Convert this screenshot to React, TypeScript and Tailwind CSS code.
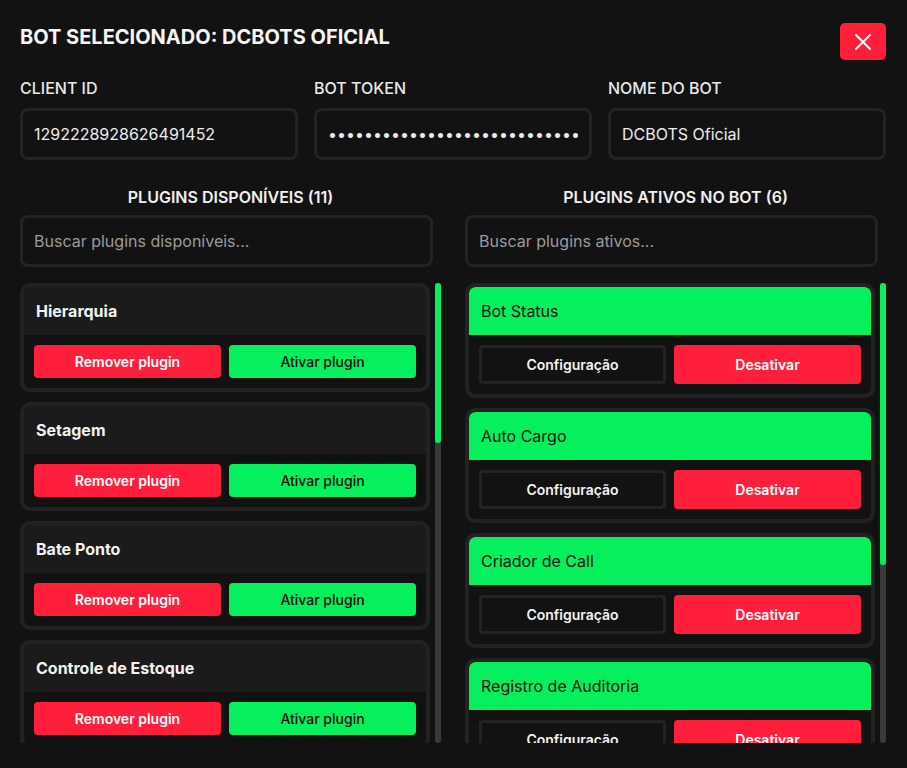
import React from "react";

type Plugin = { name: string };

const available: Plugin[] = [
  { name: "Hierarquia" },
  { name: "Setagem" },
  { name: "Bate Ponto" },
  { name: "Controle de Estoque" },
];

const active: Plugin[] = [
  { name: "Bot Status" },
  { name: "Auto Cargo" },
  { name: "Criador de Call" },
  { name: "Registro de Auditoria" },
];

const Field = ({ label, value, type = "text" }: { label: string; value: string; type?: string }) => (
  <div className="flex flex-col">
    <label className="mb-[10px] text-[16px] font-medium leading-5 text-[#e8e8e8]">{label}</label>
    <input
      readOnly
      type={type}
      value={value}
      className="h-[52px] w-full rounded-[8px] border-[3px] border-[#232323] bg-[#121212] px-[11px] text-[16px] text-[#ececec] outline-none"
    />
  </div>
);

const Scrollbar = ({ thumb }: { thumb: number }) => (
  <div className="flex w-[6px] shrink-0 flex-col rounded-full bg-[#3a3a3a]">
    <div className="w-full rounded-full bg-[#05f05b]" style={{ height: thumb }} />
  </div>
);

const AvailableCard = ({ name }: Plugin) => (
  <div className="shrink-0 overflow-hidden rounded-[10px] border-4 border-[#222222] bg-[#121212]">
    <div className="flex h-[48px] items-center rounded-t-[6px] bg-[#1b1b1b] pl-3 text-[16px] font-bold text-[#f2f2f2]">
      {name}
    </div>
    <div className="grid grid-cols-2 gap-2 px-2.5 py-2.5">
      <button className="h-[33px] rounded-[4px] bg-[#ff1f3a] text-[14px] font-semibold text-white">
        Remover plugin
      </button>
      <button className="h-[33px] rounded-[4px] bg-[#05f05b] text-[14px] font-medium text-[#0d0d0d]">
        Ativar plugin
      </button>
    </div>
  </div>
);

const ActiveCard = ({ name }: Plugin) => (
  <div className="shrink-0 overflow-hidden rounded-[10px] border-4 border-[#222222] bg-[#121212]">
    <div className="flex h-[48px] items-center rounded-t-[6px] bg-[#05f05b] pl-3 text-[16px] text-[#111111]">
      {name}
    </div>
    <div className="grid grid-cols-2 gap-2 px-2.5 py-2.5">
      <button className="h-[39px] rounded-[4px] border-[3px] border-[#232323] bg-[#121212] text-[14px] font-semibold text-[#f2f2f2]">
        Configuração
      </button>
      <button className="h-[39px] rounded-[4px] bg-[#ff1f3a] text-[14px] font-semibold text-white">
        Desativar
      </button>
    </div>
  </div>
);

const Column = ({
  title,
  placeholder,
  thumb,
  children,
}: {
  title: string;
  placeholder: string;
  thumb: number;
  children: React.ReactNode;
}) => (
  <div className="flex min-h-0 flex-col">
    <h2 className="text-center text-[16px] font-semibold leading-5 text-[#f0f0f0]">{title}</h2>
    <input
      readOnly
      placeholder={placeholder}
      className="mt-2 h-[52px] w-[calc(100%-8px)] rounded-[8px] border-[3px] border-[#232323] bg-[#121212] px-[11px] text-[16px] text-[#ececec] outline-none placeholder:text-[#9b9b9b]"
    />
    <div className="mt-4 flex h-[460px] gap-[5px]">
      <div className="flex flex-1 flex-col gap-[10px] overflow-hidden">{children}</div>
      <Scrollbar thumb={thumb} />
    </div>
  </div>
);

export default function App() {
  return (
    <div
      className="h-[768px] w-[907px] overflow-hidden bg-[#121212] pl-5 pr-[21px] pt-[23px]"
      style={{ fontFamily: "Inter, 'Noto Sans', sans-serif" }}
    >
      <div className="flex items-start justify-between">
        <h1 className="text-[20px] font-bold leading-7 text-[#f5f5f5]">BOT SELECIONADO: DCBOTS OFICIAL</h1>
        <button className="flex h-[37px] w-[46px] items-center justify-center rounded-[5px] bg-[#ff1f3a]">
          <svg width="18" height="18" viewBox="0 0 18 18" fill="none" stroke="white" strokeWidth="2" strokeLinecap="round">
            <path d="M2 2L16 16M16 2L2 16" />
          </svg>
        </button>
      </div>

      <div className="mt-[18px] grid grid-cols-3 gap-4">
        <Field label="CLIENT ID" value="1292228928626491452" />
        <Field label="BOT TOKEN" type="password" value="MTI5MjIyODkyODYyNjQ5MTQ1Mg.GxYz12.abcdefghijklmnop" />
        <Field label="NOME DO BOT" value="DCBOTS Oficial" />
      </div>

      <div className="mt-[27px] grid grid-cols-2 gap-6">
        <Column title="PLUGINS DISPONÍVEIS (11)" placeholder="Buscar plugins disponíveis..." thumb={160}>
          {available.map((p) => (
            <AvailableCard key={p.name} {...p} />
          ))}
        </Column>
        <Column title="PLUGINS ATIVOS NO BOT (6)" placeholder="Buscar plugins ativos..." thumb={282}>
          {active.map((p) => (
            <ActiveCard key={p.name} {...p} />
          ))}
        </Column>
      </div>
    </div>
  );
}
